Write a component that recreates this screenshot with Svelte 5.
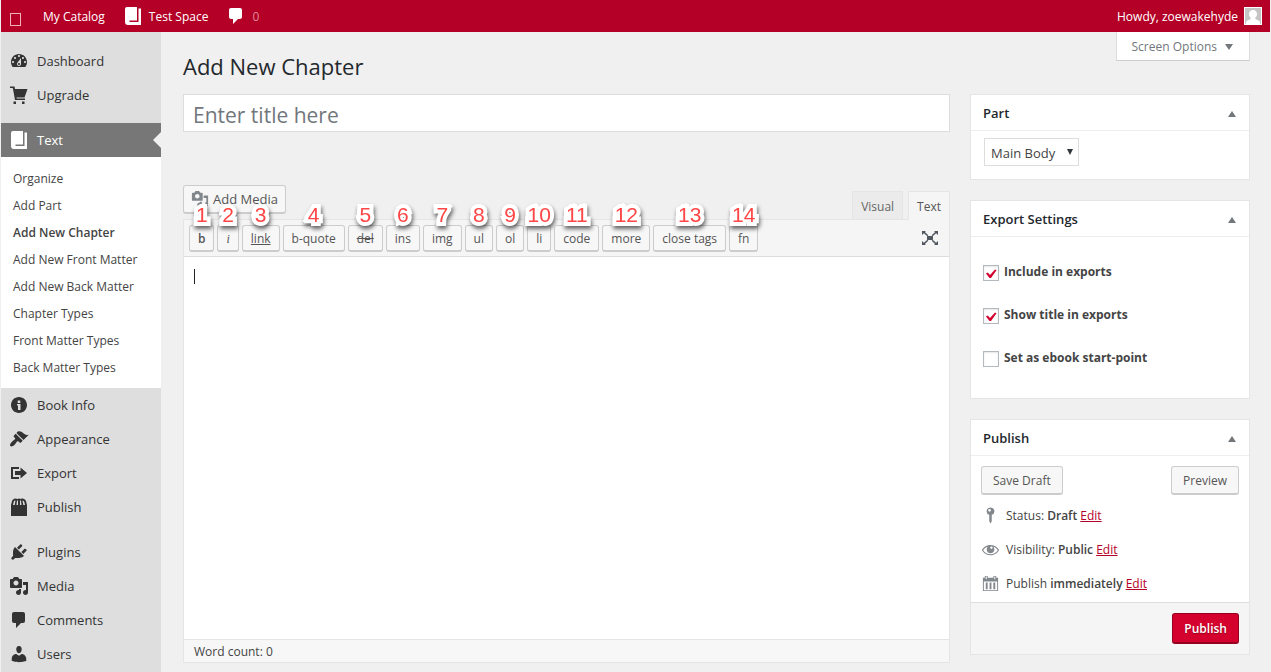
<script>
  let title = $state('');
  let content = $state('');
  let part = $state('Main Body');

  const icons = {
    dashboard: 'M3.76 16h12.48c1.1-1.37 1.76-3.11 1.76-5 0-4.42-3.58-8-8-8s-8 3.58-8 8c0 1.89.66 3.63 1.76 5zM10 4c.55 0 1 .45 1 1s-.45 1-1 1-1-.45-1-1 .45-1 1-1zM6 6c.55 0 1 .45 1 1s-.45 1-1 1-1-.45-1-1 .45-1 1-1zm8 0c.55 0 1 .45 1 1s-.45 1-1 1-1-.45-1-1 .45-1 1-1zm-5.37 5.55L12 7v6c0 1.1-.9 2-2 2s-2-.9-2-2c0-.57.24-1.08.63-1.45zM4 10c.55 0 1 .45 1 1s-.45 1-1 1-1-.45-1-1 .45-1 1-1zm12 0c.55 0 1 .45 1 1s-.45 1-1 1-1-.45-1-1 .45-1 1-1zm-5 3c0-.55-.45-1-1-1s-1 .45-1 1 .45 1 1 1 1-.45 1-1z',
    cart: 'M1 1.500h4.500L6 4h12.500l-3 8.500H7.500l.3 1H16V15H6L4 4 3.700 3H1zM4.500 16.500H7V19H4.500zM13 16.500h2.500V19H13z',
    book: 'M4 1h10v13.500H6.500V16H15.500V2.500H18V19H5a3 3 0 0 1-3-3V3a2 2 0 0 1 2-2z',
    info: 'M10 2c4.420 0 8 3.580 8 8s-3.580 8-8 8-8-3.580-8-8 3.580-8 8-8zm1.300 3.500H8.700V8h2.600zM11.500 15V9H8v1.500h1V15z',
    appearance: 'M14.480 11.060L7.410 3.990l1.500-1.500c.5-.56 2.300-.47 3.510.32 1.210.8 1.430 1.280 2.910 2.100 1.180.64 2.450 1.260 4.450.85zm-.71.71L6.700 4.700 4.930 6.470c-.39.39-.39 1.020 0 1.410l1.060 1.060c.39.39.39 1.030 0 1.420-.6.6-1.430 1.110-2.210 1.690-.35.26-.7.53-1.010.84C1.430 14.230.4 16.080 1.400 17.070c.99 1 2.840-.03 4.180-1.360.31-.31.58-.66.85-1.020.57-.78 1.080-1.610 1.690-2.210.39-.39 1.020-.39 1.410 0l1.060 1.060c.39.39 1.020.39 1.410 0z',
    exportIcon: 'M2 4h8v2H4v8h6v2H2zM6 8h5.500V4.500L18 10l-6.500 5.500V12H6z',
    bag: 'M2 8l1-4c.5-1.500 2-2.500 3.500-2.500.7 0 1.300.2 1.800.5 1-.7 2.400-.7 3.400 0 2-1 4.500 0 5.300 2l1 4v11H2zM4 8h1.700l.8-4.500C5.500 3.500 5 4 4.700 5zM7.500 8H9V3.500H8zM11 8h1.500L12 3.500h-1zM14.300 8H16l-.7-3c-.3-.8-.7-1.300-1.800-1.500z',
    plugins: 'M13.110 4.360L9.870 7.600 8 5.730l3.240-3.240c.35-.34 1.050-.2 1.560.32.520.51.66 1.210.31 1.550zm-8 1.770l.91-1.120 9.010 9.010-1.190.84c-.71.71-2.630 1.160-3.820 1.160H6.140L4.900 17.260c-.59.59-1.540.59-2.120 0-.59-.58-.59-1.530 0-2.120l1.240-1.240v-3.880c0-1.130.4-3.190 1.090-3.890zm7.260 3.970l3.240-3.240c.34-.35 1.040-.21 1.550.31.520.51.66 1.210.31 1.550l-3.240 3.250z',
    media: 'M13 11V4c0-.55-.45-1-1-1h-1.670L9 1H5L3.670 3H2c-.55 0-1 .45-1 1v7c0 .55.45 1 1 1h10c.55 0 1-.45 1-1zM7 4.500c1.380 0 2.500 1.120 2.500 2.500S8.380 9.500 7 9.500 4.500 8.380 4.500 7 5.620 4.500 7 4.500zM14 6h5v10.500c0 1.380-1.120 2.500-2.500 2.500S14 17.880 14 16.500s1.120-2.500 2.500-2.500c.17 0 .34.02.5.05V9h-3V6zm-4 8.050V13h2v3.500c0 1.380-1.120 2.500-2.500 2.500S7 17.880 7 16.500 8.120 14 9.500 14c.17 0 .34.02.5.05z',
    comments: 'M5 2h9c1.100 0 2 .9 2 2v7c0 1.100-.9 2-2 2h-2l-5 5v-5H5c-1.100 0-2-.9-2-2V4c0-1.100.9-2 2-2z',
    users: 'M10 9.250c-2.270 0-2.730-3.440-2.730-3.440C7 4.020 7.820 2 9.970 2c2.160 0 2.980 2.020 2.710 3.810 0 0-.41 3.440-2.680 3.440zm0 2.570L12.720 10c2.390 0 4.520 2.330 4.520 4.530v2.490s-3.650 1.130-7.240 1.130c-3.650 0-7.240-1.130-7.240-1.130v-2.490c0-2.250 1.940-4.480 4.470-4.480z',
    pin: 'M10 1.500a4 4 0 0 1 1.300 7.800V16L10 18.500 8.700 16V9.300A4 4 0 0 1 10 1.500zM9 3.200a1.400 1.400 0 1 0 0 2.800 1.400 1.400 0 0 0 0-2.800z',
    eye: 'M19.100 10.600c-.3-.4-.5-.8-.8-1.100C15 4.900 8.500 3.800 3.900 7.200c-1.200.9-2.200 2.100-3 3.400.2.4.5.8.8 1.200 3.300 4.600 9.600 5.600 14.200 2.400.9-.7 1.700-1.400 2.400-2.400.3-.4.5-.8.8-1.200zM10.100 7.200c.5-.5 1.300-.5 1.800 0s.5 1.300 0 1.800-1.300.5-1.800 0-.5-1.300 0-1.800zM10 14.900c-3.100 0-6-1.600-7.700-4.200C3.500 9 5.100 7.800 7 7.200c-.7.800-1 1.700-1 2.700 0 2.200 1.700 4.100 4 4.100 2.200 0 4.100-1.700 4.100-4v-.1c0-1-.4-2-1.100-2.700 1.900.6 3.500 1.800 4.700 3.500-1.700 2.600-4.600 4.200-7.700 4.200z',
    calendar: 'M2 4h2V2h3v2h6V2h3v2h2v14H2zM3 8v9h14V8zM5 2.700V5.500h1V2.700zM14 2.700V5.500h1V2.700zM5 9h2v7H5zM9 9h2v7H9zM13 9h2v7h-2z',
    expand: 'M7 8h6v4H7zM2 3h4L4.900 4.100 8.300 7.300 7.300 8.300 3.900 5.200 2 7zM18 3v4l-1.900-1.800-3.400 3.100-1-1 3.400-3.200L14 3zM2 17v-4l1.900 1.800 3.400-3.100 1 1-3.400 3.200L6 17zM18 17h-4l1.100-1.100-3.400-3.200 1-1 3.400 3.100L18 13z'
  };

  const topMenu = [
    { label: 'Dashboard', icon: 'dashboard' },
    { label: 'Upgrade', icon: 'cart' }
  ];

  const submenu = [
    'Organize',
    'Add Part',
    'Add New Chapter',
    'Add New Front Matter',
    'Add New Back Matter',
    'Chapter Types',
    'Front Matter Types',
    'Back Matter Types'
  ];

  const bookMenu = [
    { label: 'Book Info', icon: 'info' },
    { label: 'Appearance', icon: 'appearance' },
    { label: 'Export', icon: 'exportIcon' },
    { label: 'Publish', icon: 'bag' }
  ];

  const siteMenu = [
    { label: 'Plugins', icon: 'plugins' },
    { label: 'Media', icon: 'media' },
    { label: 'Comments', icon: 'comments' },
    { label: 'Users', icon: 'users' }
  ];

  const tags = ['b', 'i', 'link', 'b-quote', 'del', 'ins', 'img', 'ul', 'ol', 'li', 'code', 'more', 'close tags', 'fn'];

  let exportSettings = $state([
    { id: 'include', label: 'Include in exports', checked: true },
    { id: 'show-title', label: 'Show title in exports', checked: true },
    { id: 'start-point', label: 'Set as ebook start-point', checked: false }
  ]);

  const publishInfo = [
    { icon: 'pin', label: 'Status:', value: 'Draft' },
    { icon: 'eye', label: 'Visibility:', value: 'Public' },
    { icon: 'calendar', label: 'Publish', value: 'immediately' }
  ];

  let wordCount = $derived(content.split(/\s+/).filter(Boolean).length);
</script>

{#snippet icon(name)}
  <svg class="icon" viewBox="0 0 20 20" aria-hidden="true">
    <path d={icons[name]} fill="currentColor" fill-rule="evenodd" />
  </svg>
{/snippet}

{#snippet menu(items)}
  <ul class="menu">
    {#each items as item}
      <li><a class="menu-item" href="#{item.label}">{@render icon(item.icon)}{item.label}</a></li>
    {/each}
  </ul>
{/snippet}

{#snippet boxHeader(text)}
  <header class="box-header">
    <h2>{text}</h2>
    <button class="toggle" aria-label="Toggle {text}"><span class="arrow up"></span></button>
  </header>
{/snippet}

<div class="page">
  <nav class="adminbar">
    <a class="home" href="#home" aria-label="Home"><span class="glyph"></span></a>
    <a href="#catalog"><span>My Catalog</span></a>
    <a href="#book">{@render icon('book')}<span>Test Space</span></a>
    <a class="bubble" href="#comments">{@render icon('comments')}<span>0</span></a>
    <a class="account" href="#profile">
      <span>Howdy, zoewakehyde</span>
      <svg class="avatar" viewBox="0 0 18 18" aria-hidden="true">
        <path d="M0 0h18v18H0z" fill="#fff" />
        <path d="M1 1h16v16H1z" fill="#c5c5c5" />
        <path d="M9 3c2.500 0 4 1.700 4 4 0 1.600-.7 3-1.700 3.800V12l4.200 2 .8 3H1.700l.8-3 4.200-2v-1.200C5.700 10 5 8.600 5 7c0-2.300 1.500-4 4-4z" fill="#fff" />
      </svg>
    </a>
  </nav>

  <div class="body">
    <aside class="sidebar">
      {@render menu(topMenu)}
      <a class="menu-item current" href="#text">{@render icon('book')}Text</a>
      <ul class="submenu">
        {#each submenu as item}
          <li><a class:active={item === 'Add New Chapter'} href="#{item}">{item}</a></li>
        {/each}
      </ul>
      {@render menu(bookMenu)}
      {@render menu(siteMenu)}
    </aside>

    <main>
      <div class="heading">
        <h1>Add New Chapter</h1>
        <button class="screen-options">Screen Options <span class="arrow down"></span></button>
      </div>

      <div class="columns">
        <div class="editor-column">
          <input class="title" type="text" placeholder="Enter title here" aria-label="Title" bind:value={title} />

          <div class="editor-tools">
            <button class="button add-media">{@render icon('media')}Add Media</button>
            <div class="tabs">
              <button class="tab">Visual</button>
              <button class="tab selected">Text</button>
            </div>
          </div>

          <div class="editor">
            <div class="toolbar">
              {#each tags as tag, i}
                <div class="tag">
                  <button class="button small {tag}">{tag}</button>
                  <span class="number">{i + 1}</span>
                </div>
              {/each}
              <button class="fullscreen" aria-label="Fullscreen">{@render icon('expand')}</button>
            </div>
            <div class="writing">
              <span class="caret"></span>
              <textarea aria-label="Chapter text" bind:value={content}></textarea>
            </div>
            <div class="status">Word count: {wordCount}</div>
          </div>
        </div>

        <div class="side-column">
          <section class="box">
            {@render boxHeader('Part')}
            <div class="part">
              <div class="select">
                <select aria-label="Part" bind:value={part}>
                  <option>Main Body</option>
                </select>
                <span class="arrow down"></span>
              </div>
            </div>
          </section>

          <section class="box">
            {@render boxHeader('Export Settings')}
            <div class="settings">
              {#each exportSettings as setting}
                <div class="setting">
                  <input type="checkbox" id={setting.id} bind:checked={setting.checked} />
                  <label for={setting.id}>{setting.label}</label>
                </div>
              {/each}
            </div>
          </section>

          <section class="box">
            {@render boxHeader('Publish')}
            <div class="publish">
              <div class="publish-actions">
                <button class="button">Save Draft</button>
                <button class="button">Preview</button>
              </div>
              {#each publishInfo as info}
                <div class="info">
                  {@render icon(info.icon)}
                  <span>{info.label} <b>{info.value}</b> <a href="#edit">Edit</a></span>
                </div>
              {/each}
            </div>
            <footer class="publish-footer">
              <button class="button primary">Publish</button>
            </footer>
          </section>
        </div>
      </div>
    </main>
  </div>
</div>

<style>
  :global(body) {
    background: #f0f0f0;
  }

  .page {
    padding: 0 1px;
    min-height: 100vh;
    box-sizing: border-box;
    overflow: hidden;
    font-family: 'Open Sans', 'Noto Sans', sans-serif;
    font-size: 12px;
    line-height: 18px;
    color: #444;
    display: flex;
    flex-direction: column;
  }

  .page :global(*) {
    box-sizing: border-box;
  }

  button,
  input,
  select,
  textarea {
    font: inherit;
    color: inherit;
    margin: 0;
  }

  ul {
    list-style: none;
    margin: 0;
    padding: 0;
  }

  a {
    color: inherit;
    text-decoration: none;
  }

  .icon {
    width: 20px;
    height: 20px;
    flex: none;
  }

  /* Admin bar */
  .adminbar {
    display: flex;
    align-items: center;
    height: 32px;
    padding: 0 8px;
    background: #b40026;
    color: #fff;
  }

  .adminbar a {
    display: flex;
    align-items: center;
    gap: 6px;
    padding-right: 18px;
  }

  .adminbar span {
    padding-top: 2px;
  }

  .adminbar .home {
    padding-right: 22px;
  }

  .glyph {
    width: 11px;
    height: 13px;
    margin: 6px 0 0 1px;
    border: 1px solid #f0b0bc;
  }

  .bubble {
    color: #e0899a;
  }

  .bubble .icon {
    color: #fff;
  }

  .adminbar .account {
    margin-left: auto;
    padding-right: 0;
  }

  .avatar {
    width: 18px;
    height: 18px;
  }

  /* Sidebar */
  .body {
    display: flex;
    flex: 1;
  }

  .sidebar {
    flex: none;
    width: 160px;
    padding-top: 12px;
    background: #dedede;
  }

  .menu + .menu {
    margin-top: 11px;
  }

  .menu-item {
    display: flex;
    align-items: center;
    gap: 8px;
    height: 34px;
    padding-left: 8px;
    font-size: 13px;
    color: #333;
  }

  .current {
    position: relative;
    margin-top: 11px;
    background: #777;
    color: #fff;
  }

  .current::after {
    content: '';
    position: absolute;
    right: 0;
    top: 9px;
    border: 8px solid transparent;
    border-left: none;
    border-right-color: #f0f0f0;
  }

  .submenu {
    padding: 8px 0 7px;
    background: #fff;
  }

  .submenu a {
    display: block;
    padding-left: 12px;
    line-height: 27px;
    white-space: nowrap;
  }

  .submenu .active {
    font-weight: 600;
  }

  /* Main area */
  main {
    flex: 1;
    min-width: 0;
    padding: 0 20px 0 22px;
  }

  .heading {
    display: flex;
    justify-content: space-between;
    align-items: flex-start;
    height: 62px;
  }

  h1 {
    margin: 20px 0 0;
    font-size: 22px;
    font-weight: 400;
    line-height: 29px;
    color: #23282d;
  }

  .screen-options {
    display: flex;
    align-items: center;
    gap: 8px;
    height: 29px;
    padding: 2px 16px 0 15px;
    border: 1px solid #ddd;
    border-top: none;
    border-bottom-color: #ccc;
    background: #fff;
    color: #72777c;
  }

  .arrow {
    display: inline-block;
    border: 4px solid transparent;
  }

  .arrow.up {
    border-top: none;
    border-bottom: 6px solid #72777c;
  }

  .arrow.down {
    border-bottom: none;
    border-top: 6px solid #72777c;
  }

  .columns {
    display: flex;
    gap: 20px;
  }

  .editor-column {
    flex: 1;
    min-width: 0;
  }

  .title {
    display: block;
    width: 100%;
    height: 38px;
    padding: 4px 9px 0;
    border: 1px solid #ddd;
    background: #fff;
    font-size: 21px;
    outline: none;
  }

  .title::placeholder {
    color: #72777c;
    opacity: 1;
  }

  .editor-tools {
    display: flex;
    justify-content: space-between;
    align-items: flex-start;
    margin-top: 53px;
  }

  .button {
    display: inline-flex;
    align-items: center;
    justify-content: center;
    height: 29px;
    padding: 2px 11px 0;
    border: 1px solid #ccc;
    border-bottom-width: 2px;
    border-radius: 3px;
    background: #f7f7f7;
    color: #555;
    white-space: nowrap;
  }

  .add-media {
    gap: 4px;
    padding: 0 7px;
    font-size: 13px;
  }

  .add-media .icon {
    color: #82878c;
    width: 18px;
    height: 18px;
  }

  .tabs {
    display: flex;
    gap: 5px;
    margin-top: 6px;
  }

  .tab {
    position: relative;
    height: 28px;
    padding: 2px 8px 0;
    border: 1px solid #e5e5e5;
    border-bottom: none;
    background: #ebebeb;
    color: #666;
  }

  .tab.selected {
    height: 29px;
    margin-bottom: -1px;
    background: #f5f5f5;
    color: #555;
  }

  .editor {
    border: 1px solid #e5e5e5;
    background: #fff;
  }

  .toolbar {
    display: flex;
    gap: 3px;
    height: 37px;
    padding: 5px 9px 0 5px;
    border-bottom: 1px solid #ddd;
    background: #f5f5f5;
  }

  .tag {
    position: relative;
  }

  .small {
    height: 27px;
    padding: 2px 8px 0;
  }

  .small.b {
    font-weight: 600;
  }

  .small.i {
    font-family: 'Liberation Serif', serif;
    font-style: italic;
  }

  .small.link {
    text-decoration: underline;
  }

  .small.del {
    text-decoration: line-through;
  }

  .number {
    position: absolute;
    top: -22px;
    left: 50%;
    transform: translateX(-50%);
    font-family: 'Liberation Sans', Arial, sans-serif;
    font-size: 21px;
    line-height: 24px;
    color: #ff4545;
    -webkit-text-stroke: 8px #fff;
    paint-order: stroke fill;
    stroke-linejoin: round;
    filter: drop-shadow(1px 3px 2px rgba(0, 0, 0, 0.6));
    pointer-events: none;
  }

  .fullscreen {
    margin-left: auto;
    padding: 3px 0 0;
    border: none;
    background: none;
    color: #50575e;
    height: 24px;
  }

  .writing {
    position: relative;
    height: 382px;
  }

  .writing textarea {
    display: block;
    width: 100%;
    height: 100%;
    padding: 10px;
    border: none;
    outline: none;
    resize: none;
    background: none;
  }

  .caret {
    position: absolute;
    left: 10px;
    top: 12px;
    width: 1px;
    height: 15px;
    background: #222;
  }

  .status {
    padding: 3px 10px 1px;
    border-top: 1px solid #e5e5e5;
    background: #f7f7f7;
  }

  /* Side boxes */
  .side-column {
    flex: none;
    width: 280px;
    display: flex;
    flex-direction: column;
    gap: 20px;
  }

  .box {
    border: 1px solid #e5e5e5;
    background: #fff;
  }

  .box-header {
    display: flex;
    align-items: center;
    justify-content: space-between;
    height: 36px;
    padding: 0 13px 0 12px;
    border-bottom: 1px solid #eee;
  }

  h2 {
    margin: 0;
    font-size: 13px;
    font-weight: 600;
    color: #23282d;
  }

  .toggle {
    display: flex;
    padding: 2px 0 0;
    border: none;
    background: none;
  }

  .part {
    padding: 7px 13px 13px;
  }

  .select {
    position: relative;
    width: 95px;
  }

  .select select {
    display: block;
    appearance: none;
    width: 100%;
    height: 28px;
    padding: 1px 6px 0;
    border: 1px solid #ddd;
    border-radius: 0;
    background: #fff;
    font-size: 13px;
  }

  .select .arrow {
    position: absolute;
    right: 6px;
    top: 11px;
    border-width: 6px 3px 0;
    border-top-color: #32373c;
    pointer-events: none;
  }

  .settings {
    display: flex;
    flex-direction: column;
    gap: 24px;
    padding: 25px 12px 31px;
  }

  .setting {
    display: flex;
    align-items: flex-end;
    gap: 5px;
    height: 19px;
    font-weight: 700;
  }

  input[type='checkbox'] {
    appearance: none;
    width: 16px;
    height: 16px;
    border: 1px solid #b4b9be;
    background: #fff;
    box-shadow: inset 0 1px 2px rgba(0, 0, 0, 0.1);
  }

  input[type='checkbox']:checked {
    background: #fff url("data:image/svg+xml,%3Csvg xmlns='http://www.w3.org/2000/svg' viewBox='0 0 14 14'%3E%3Cpath d='M2 7.500l1.800-1L6 9l5-5.500 1.500.8L7 12H5.500z' fill='%23d4002d'/%3E%3C/svg%3E");
  }

  .publish {
    padding: 10px 10px 2px;
  }

  .publish-actions {
    display: flex;
    justify-content: space-between;
    margin-bottom: 3px;
  }

  .info {
    display: flex;
    align-items: center;
    gap: 6px;
    height: 34px;
  }

  .info .icon {
    color: #82878c;
    width: 19px;
    height: 19px;
  }

  .info span {
    padding-top: 2px;
  }

  .info b {
    font-weight: 600;
  }

  .info a {
    color: #b40026;
    text-decoration: underline;
  }

  .publish-footer {
    display: flex;
    justify-content: flex-end;
    padding: 10px;
    border-top: 1px solid #ddd;
    background: #f5f5f5;
  }

  .button.primary {
    height: 31px;
    border-color: #95001f;
    background: #d4002d;
    color: #fff;
    font-weight: 600;
    text-shadow: 0 1px 1px #95001f;
  }
</style>
